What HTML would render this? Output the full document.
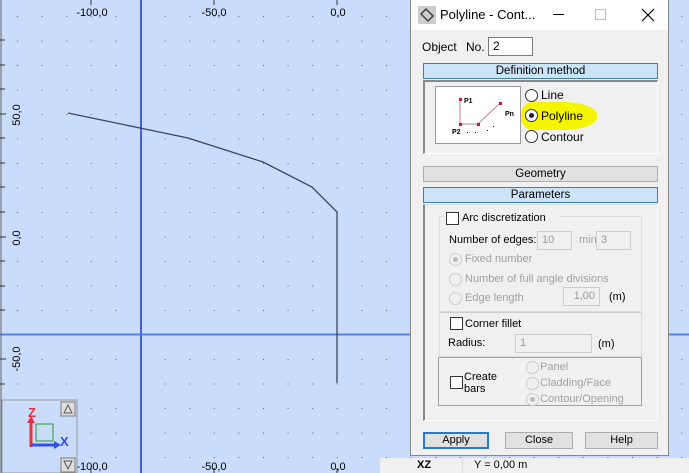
<!DOCTYPE html>
<html><head><meta charset="utf-8"><style>
*{margin:0;padding:0;box-sizing:border-box}
body{width:689px;height:473px;overflow:hidden;position:relative;background:#cadcfb;font-family:"Liberation Sans",sans-serif;font-size:11px;color:#000}
.a{position:absolute}
.hdr{position:absolute;left:423px;width:235px;height:16px;text-align:center;line-height:14px;font-size:11.5px}
.blue{background:#cce4f7;border:1px solid #3c7fb1}
.grey{background:#e1e1e1;border:1px solid #adadad}
.inp{position:absolute;background:#fff;border:1px solid #7a7a7a;height:19px;line-height:17px;padding-left:4px}
.dis{background:#f0f0f0;border-color:#ccc;color:#999}
.cb{position:absolute;width:13px;height:13px;border:1px solid #333;background:#fff}
.rb{position:absolute;width:13px;height:13px;border:1px solid #333;border-radius:50%;background:#fff}
.rb.d{border-color:#ccc;background:#f0f0f0}
.rb.on::after{content:"";position:absolute;left:3px;top:3px;width:5px;height:5px;border-radius:50%;background:#222}
.rb.d.on::after{background:#bbb}
.g{color:#a0a0a0}
.btn{position:absolute;top:432px;height:17px;background:#e1e1e1;border:1px solid #adadad;text-align:center;line-height:15px}
</style></head><body>
<svg class="a" style="left:0;top:0" width="689" height="473">
<defs><pattern id="p" x="17" y="16" width="24.6" height="24.5" patternUnits="userSpaceOnUse"><rect x="0" y="0" width="1" height="1" fill="#55607a"/></pattern></defs>
<rect width="689" height="473" fill="url(#p)"/>
<line x1="141" y1="0" x2="141" y2="473" stroke="#4060e0" stroke-width="2"/>
<line x1="0" y1="334.5" x2="689" y2="334.5" stroke="#5a7ee8" stroke-width="2"/>
<line x1="1" y1="0" x2="1" y2="473" stroke="#666" stroke-width="1"/>
<g stroke="#333" stroke-width="1">
<line x1="0" y1="40" x2="5" y2="40"/><line x1="0" y1="65" x2="5" y2="65"/><line x1="0" y1="89" x2="5" y2="89"/><line x1="0" y1="114" x2="6" y2="114"/><line x1="0" y1="138" x2="5" y2="138"/><line x1="0" y1="163" x2="5" y2="163"/><line x1="0" y1="187" x2="5" y2="187"/><line x1="0" y1="212" x2="5" y2="212"/><line x1="0" y1="237" x2="6" y2="237"/><line x1="0" y1="261" x2="5" y2="261"/><line x1="0" y1="286" x2="5" y2="286"/><line x1="0" y1="310" x2="5" y2="310"/><line x1="0" y1="359" x2="6" y2="359"/><line x1="0" y1="384" x2="5" y2="384"/>
<line x1="91" y1="0" x2="91" y2="5"/><line x1="214" y1="0" x2="214" y2="5"/><line x1="337" y1="0" x2="337" y2="5"/>
<line x1="91" y1="468" x2="91" y2="473"/><line x1="214" y1="468" x2="214" y2="473"/><line x1="337" y1="468" x2="337" y2="473"/>
</g>
<polyline points="68,113 188,138 263,162 312,187 337,212 337,383" fill="none" stroke="#3a4560" stroke-width="1.3"/>
<g font-family="Liberation Sans" font-size="11" fill="#000">
<text x="92" y="16" text-anchor="middle">-100,0</text><text x="214" y="16" text-anchor="middle">-50,0</text><text x="338" y="16" text-anchor="middle">0,0</text>
<text x="92" y="470" text-anchor="middle">-100,0</text><text x="214" y="470" text-anchor="middle">-50,0</text><text x="338" y="470" text-anchor="middle">0,0</text>
<text transform="translate(20,115) rotate(-90)" text-anchor="middle">50,0</text>
<text transform="translate(20,238) rotate(-90)" text-anchor="middle">0,0</text>
<text transform="translate(20,359) rotate(-90)" text-anchor="middle">-50,0</text>
</g>
<rect x="2" y="400" width="75" height="73" fill="#cadcfb" stroke="#999"/>
<rect x="61" y="402" width="14" height="14" fill="#e0e0e0" stroke="#777"/><path d="M64,413 L68,405 L72,413Z" fill="none" stroke="#555"/>
<rect x="61" y="458" width="14" height="14" fill="#e0e0e0" stroke="#777"/><path d="M64,461 L68,469 L72,461Z" fill="none" stroke="#555"/>
<rect x="36" y="424" width="17" height="17" fill="none" stroke="#2a9a2a"/>
<line x1="31" y1="447" x2="31" y2="422" stroke="#e83040" stroke-width="3"/><path d="M27,423 L31,416 L35,423Z" fill="#e83040"/>
<line x1="31" y1="445" x2="55" y2="445" stroke="#3050e8" stroke-width="3"/><path d="M54,441 L61,445 L54,449Z" fill="#3050e8"/>
<text x="28" y="417" font-family="Liberation Sans" font-size="13" fill="#e83040" font-weight="bold">Z</text>
<text x="60" y="446" font-family="Liberation Sans" font-size="13" fill="#3050e8" font-weight="bold">X</text>
</svg>
<div class="a" style="left:380px;top:458px;width:309px;height:15px;background:#f0f0f0;font-size:11px;line-height:15px">
<span class="a" style="left:37px;font-weight:bold">XZ</span><span class="a" style="left:82px;top:0;width:1px;height:15px;background:#ddd"></span><span class="a" style="left:94px">Y = 0,00 m</span></div>
<div class="a" style="left:410px;top:0;width:259px;height:456px;background:#f0f0f0;border:1px solid #888"></div>
<div class="a" style="left:411px;top:0;width:257px;height:30px;background:#fff"></div>
<svg class="a" style="left:418px;top:6px" width="18" height="18"><rect x="0" y="0" width="18" height="18" fill="#ccc"/><path d="M3,8 L8,3 L15,10 L10,15Z" fill="none" stroke="#333" stroke-width="1.3"/></svg>
<div class="a" style="left:440px;top:7px;font-size:13px">Polyline - Cont...</div>
<div class="a" style="left:553px;top:14px;width:11px;height:1px;background:#000"></div>
<div class="a" style="left:595px;top:9px;width:11px;height:11px;border:1px solid #bbb"></div>
<svg class="a" style="left:641px;top:8px" width="14" height="14"><path d="M1,1 L13,13 M13,1 L1,13" stroke="#000" stroke-width="1.2"/></svg>
<div class="a" style="left:422px;top:40px;font-size:12px">Object</div><div class="a" style="left:466px;top:40px;font-size:12px">No.</div>
<div class="inp" style="left:488px;top:37px;width:45px;font-size:12px">2</div>
<div class="hdr blue" style="top:63px">Definition method</div>
<div class="a" style="left:423px;top:80px;width:235px;height:74px;border:1px solid #fff;border-left:2px solid #888;border-top:2px solid #888"></div>
<svg class="a" style="left:435px;top:86px" width="86" height="58"><rect x="0.5" y="0.5" width="85" height="57" fill="#fff" stroke="#999"/>
<polyline points="25,13 25,38 43,38 65,17" fill="none" stroke="#c08090" stroke-width="1"/>
<rect x="24" y="12" width="3" height="3" fill="#d0103a"/><rect x="24" y="37" width="3" height="3" fill="#d0103a"/><rect x="42" y="37" width="3" height="3" fill="#d0103a"/><rect x="64" y="16" width="3" height="3" fill="#d0103a"/>
<text x="29" y="17" font-size="7" font-weight="bold" font-family="Liberation Sans">P1</text><text x="17" y="48" font-size="7" font-weight="bold" font-family="Liberation Sans">P2</text><text x="70" y="30" font-size="7" font-weight="bold" font-family="Liberation Sans">Pn</text>
<g fill="#000"><rect x="32" y="46" width="1" height="1"/><rect x="40" y="46" width="1" height="1"/><rect x="52" y="44" width="1" height="1"/><rect x="58" y="40" width="1" height="1"/></g></svg>
<div class="a" style="left:521px;top:102px;width:76px;height:28px;background:#f5f500;border-radius:12px 45% 45% 12px"></div>
<div class="rb" style="left:525px;top:89px"></div><div class="a" style="left:541px;top:88px;font-size:12px">Line</div>
<div class="rb on" style="left:525px;top:109px"></div><div class="a" style="left:541px;top:109px;font-size:12px">Polyline</div>
<div class="rb" style="left:525px;top:130px"></div><div class="a" style="left:541px;top:130px;font-size:12px">Contour</div>
<div class="hdr grey" style="top:166px">Geometry</div>
<div class="hdr blue" style="top:187px">Parameters</div>
<div class="a" style="left:423px;top:204px;width:235px;height:217px;border:1px solid #fff;border-left:2px solid #888;border-top:1px solid #ddd"></div>
<div class="a" style="left:439px;top:216px;width:203px;height:96px;border:1px solid #dcdcdc"></div>
<div class="a" style="left:444px;top:210px;width:115px;height:14px;background:#f0f0f0"></div>
<div class="cb" style="left:446px;top:212px"></div><div class="a" style="left:462px;top:212px">Arc discretization</div>
<div class="a" style="left:449px;top:234px">Number of edges:</div>
<div class="inp dis" style="left:537px;top:231px;width:35px">10</div><div class="a g" style="left:579px;top:234px">min</div>
<div class="inp dis" style="left:596px;top:231px;width:35px">3</div>
<div class="rb d on" style="left:449px;top:253px"></div><div class="a g" style="left:465px;top:253px">Fixed number</div>
<div class="rb d" style="left:449px;top:273px"></div><div class="a g" style="left:465px;top:273px">Number of full angle divisions</div>
<div class="rb d" style="left:449px;top:292px"></div><div class="a g" style="left:465px;top:292px">Edge length</div>
<div class="inp dis" style="left:563px;top:287px;width:37px;text-align:right;padding-right:4px">1,00</div><div class="a" style="left:609px;top:291px">(m)</div>
<div class="a" style="left:439px;top:312px;width:203px;height:45px;border:1px solid #dcdcdc;border-top:1px solid #ccc"></div>
<div class="cb" style="left:450px;top:317px"></div><div class="a" style="left:465px;top:318px">Corner fillet</div>
<div class="a" style="left:448px;top:337px">Radius:</div>
<div class="inp dis" style="left:515px;top:334px;width:77px">1</div><div class="a" style="left:598px;top:338px">(m)</div>
<div class="a" style="left:438px;top:357px;width:204px;height:49px;border:1px solid #a0a0a0"></div>
<div class="cb" style="left:450px;top:376px"></div><div class="a" style="left:464px;top:371px;line-height:12px">Create<br>bars</div>
<div class="rb d" style="left:526px;top:361px"></div><div class="a g" style="left:540px;top:361px">Panel</div>
<div class="rb d" style="left:526px;top:377px"></div><div class="a g" style="left:540px;top:377px">Cladding/Face</div>
<div class="rb d on" style="left:526px;top:393px"></div><div class="a g" style="left:540px;top:393px">Contour/Opening</div>
<div class="btn" style="left:423px;width:66px;border:2px solid #2a78c8;line-height:13px">Apply</div>
<div class="btn" style="left:505px;width:68px">Close</div>
<div class="btn" style="left:585px;width:73px">Help</div>
</body></html>
